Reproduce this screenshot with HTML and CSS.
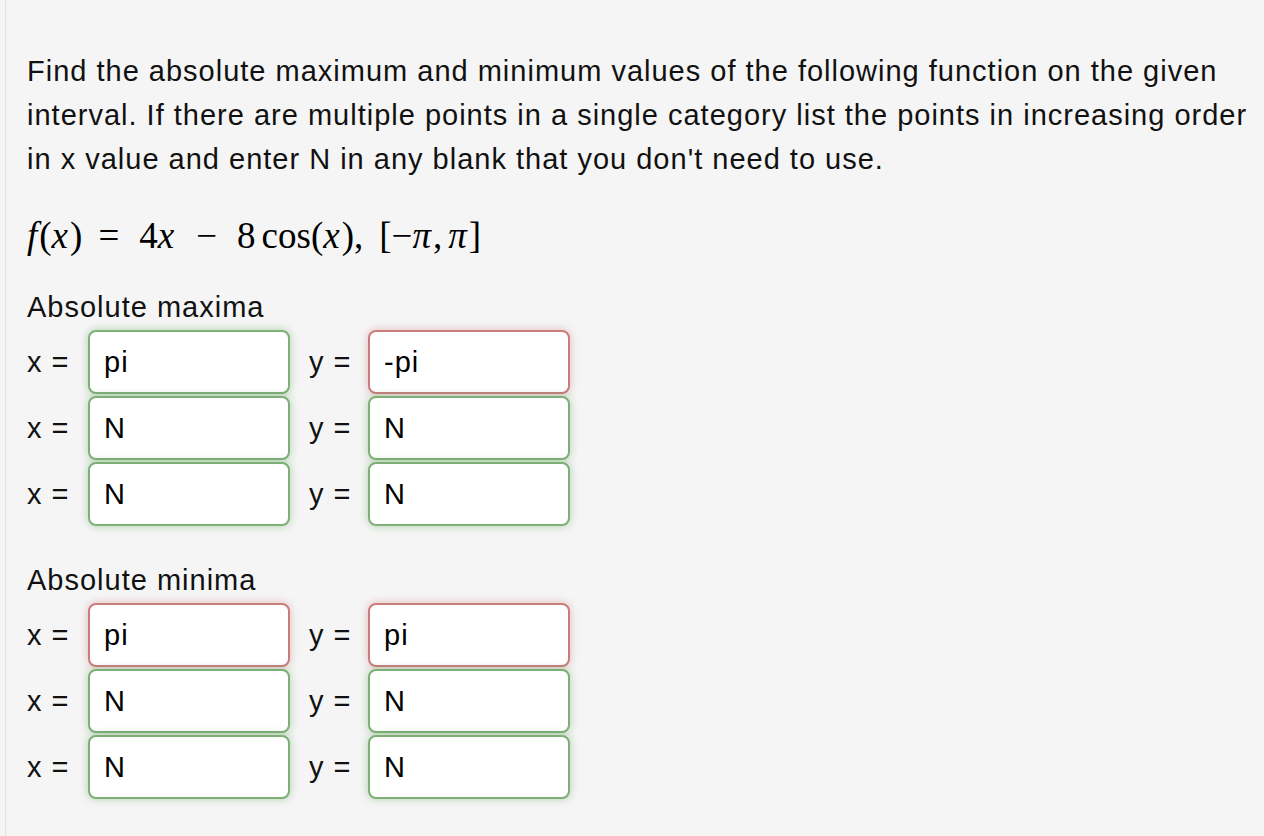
FILE: index.html
```html
<!DOCTYPE html>
<html lang="en">
<head>
    <meta charset="UTF-8">
    <title>Absolute extrema</title>
    <link rel="stylesheet" href="styles.css">
</head>
<body>
    <div class="problem">
        <p class="text">Find the absolute maximum and minimum values of the following function on the given interval. If there are multiple points in a single category list the points in increasing order in x value and enter N in any blank that you don't need to use.</p>

        <div class="formula"><i>f</i>(<i>x</i>)<span class="rel">=</span>4<i>x</i><span class="bin">&minus;</span>8<span class="thin"></span>cos(<i>x</i>),<span class="quad"></span>[&minus;<i>&pi;</i>,<span class="thin"></span><i>&pi;</i>]</div>

        <div class="heading">Absolute maxima</div>
        <div class="row">
            <span class="lbl">x =</span>
            <input class="ans good" type="text" value="pi">
            <span class="lbl lbl-y">y =</span>
            <input class="ans bad" type="text" value="-pi">
        </div>
        <div class="row">
            <span class="lbl">x =</span>
            <input class="ans good" type="text" value="N">
            <span class="lbl lbl-y">y =</span>
            <input class="ans good" type="text" value="N">
        </div>
        <div class="row">
            <span class="lbl">x =</span>
            <input class="ans good" type="text" value="N">
            <span class="lbl lbl-y">y =</span>
            <input class="ans good" type="text" value="N">
        </div>

        <div class="heading heading-min">Absolute minima</div>
        <div class="row">
            <span class="lbl">x =</span>
            <input class="ans bad" type="text" value="pi">
            <span class="lbl lbl-y">y =</span>
            <input class="ans bad" type="text" value="pi">
        </div>
        <div class="row">
            <span class="lbl">x =</span>
            <input class="ans good" type="text" value="N">
            <span class="lbl lbl-y">y =</span>
            <input class="ans good" type="text" value="N">
        </div>
        <div class="row">
            <span class="lbl">x =</span>
            <input class="ans good" type="text" value="N">
            <span class="lbl lbl-y">y =</span>
            <input class="ans good" type="text" value="N">
        </div>
    </div>
</body>
</html>
```

FILE: styles.css
```css
body {
    margin: 0;
    background-color: #f5f5f5;
    font-family: "Liberation Sans", Arial, sans-serif;
    color: #111;
}
.problem {
    margin-left: 5px;
    border-left: 1px solid #e2e2e2;
    padding: 49px 10px 30px 21px;
    min-height: 757px;
}
.text {
    margin: 0;
    font-size: 29px;
    letter-spacing: 1px;
    line-height: 44px;
}
.formula {
    margin-top: 33px;
    height: 44px;
    line-height: 44px;
    font-family: "Liberation Serif", "DejaVu Serif", serif;
    font-size: 37px;
    color: #000;
    white-space: nowrap;
}
.formula i {
    padding-right: 2px;
}
.formula .rel {
    margin: 0 20px 0 16px;
}
.formula .bin {
    margin: 0 20px;
}
.formula .thin {
    display: inline-block;
    width: 6px;
}
.formula .quad {
    display: inline-block;
    width: 16px;
}
.heading {
    margin-top: 27px;
    font-size: 29px;
    letter-spacing: 1px;
    line-height: 44px;
}
.heading-min {
    margin-top: 31px;
}
.row {
    display: flex;
    align-items: center;
    height: 66px;
    font-size: 29px;
    letter-spacing: 1px;
}
.lbl {
    width: 61px;
}
.lbl-y {
    width: 59px;
    margin-left: 19px;
}
.ans {
    box-sizing: border-box;
    width: 202px;
    height: 64px;
    margin: 0;
    padding: 0 14px;
    font-family: "Liberation Sans", Arial, sans-serif;
    font-size: 29px;
    letter-spacing: 1px;
    color: #000;
    background-color: #fff;
    border-radius: 8px;
    border: 2px solid #7daf77;
    outline: none;
}
.good {
    border-color: #7daf77;
    box-shadow: 0 0 8px rgba(98, 160, 90, 0.45);
}
.bad {
    border-color: #c97c7c;
    box-shadow: 0 0 8px rgba(200, 100, 100, 0.4);
}
```
